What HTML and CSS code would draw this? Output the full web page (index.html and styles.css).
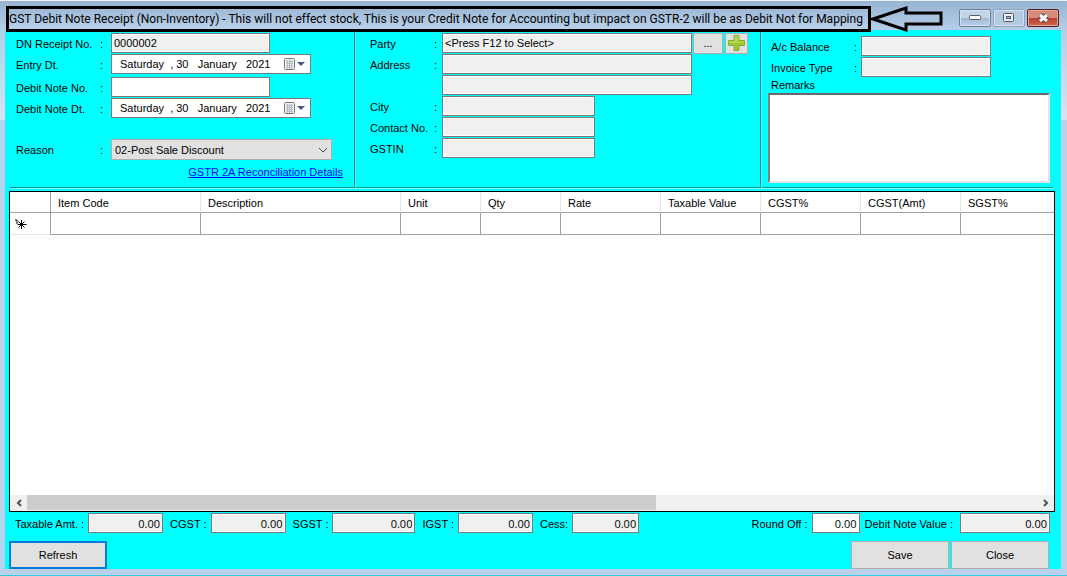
FILE: index.html
```html
<!DOCTYPE html>
<html lang="en">
<head>
    <meta charset="UTF-8">
    <title>GST Debit Note Receipt</title>
    <link rel="stylesheet" href="styles.css">
</head>

<body>
    <div class="window">
        <div class="titlebar">
            <h1>GST Debit Note Receipt (Non-Inventory) - This will not effect stock, This is your Credit Note for Accounting but impact on GSTR-2 will be as Debit Not for Mapping</h1>
            <svg class="arrow" width="72" height="26" viewBox="0 0 72 26">
                <path d="M2 13 L35 2 V7 H70 V18 H35 V24 Z" fill="none" stroke="#000" stroke-width="3"/>
            </svg>
            <div class="window-buttons">
                <button type="button" aria-label="Minimize">
                    <svg width="12" height="6" viewBox="0 0 12 6"><rect x="0.5" y="0.5" width="11" height="4" rx="1" fill="#fff" stroke="#555a66"/></svg>
                </button>
                <button type="button" class="maximize" aria-label="Maximize">
                    <svg width="12" height="10" viewBox="0 0 12 10"><rect x="0.5" y="0.5" width="10" height="8" rx="1" fill="#e8eff7" stroke="#555a66"/><rect x="3.5" y="3.5" width="4" height="2" fill="#a9c2dd" stroke="#555a66"/></svg>
                </button>
                <button type="button" class="close" aria-label="Close window">
                    <svg width="13" height="10" viewBox="0 0 13 10"><path d="M3 2 L10 8 M10 2 L3 8" stroke="#54414a" stroke-width="5"/><path d="M3 2 L10 8 M10 2 L3 8" stroke="#fff" stroke-width="3"/></svg>
                </button>
            </div>
        </div>

        <form class="content">
            <div class="panels">
                <div class="panel receipt">
                    <div class="row">
                        <label for="receipt-no">DN Receipt No.</label><span class="colon">:</span>
                        <input type="text" id="receipt-no" class="short" value="0000002" readonly>
                    </div>
                    <div class="row spaced">
                        <label for="entry-date">Entry Dt.</label><span class="colon">:</span>
                        <div class="date">
                            <input type="text" id="entry-date" value="Saturday  , 30   January   2021">
                            <button type="button" aria-label="Pick entry date">
                                <svg width="22" height="13" viewBox="0 0 22 13"><rect x="0.5" y="0.5" width="10" height="11" rx="1" fill="#f2f2f2" stroke="#777"/><path d="M2 3.5h7M2 5.5h7M2 7.5h7M2 9.5h7M3.5 2v9M5.500 2v9M7.500 2v9" stroke="#b5bcc5"/><path d="M13 4h8l-4 4z" fill="#44597c"/></svg>
                            </button>
                        </div>
                    </div>
                    <div class="row">
                        <label for="note-no">Debit Note No.</label><span class="colon">:</span>
                        <input type="text" id="note-no" class="short">
                    </div>
                    <div class="row">
                        <label for="note-date">Debit Note Dt.</label><span class="colon">:</span>
                        <div class="date">
                            <input type="text" id="note-date" value="Saturday  , 30   January   2021">
                            <button type="button" aria-label="Pick debit note date">
                                <svg width="22" height="13" viewBox="0 0 22 13"><rect x="0.5" y="0.5" width="10" height="11" rx="1" fill="#f2f2f2" stroke="#777"/><path d="M2 3.5h7M2 5.5h7M2 7.5h7M2 9.5h7M3.5 2v9M5.500 2v9M7.500 2v9" stroke="#b5bcc5"/><path d="M13 4h8l-4 4z" fill="#44597c"/></svg>
                            </button>
                        </div>
                    </div>
                    <div class="row reason">
                        <label for="reason">Reason</label><span class="colon">:</span>
                        <div class="dropdown">
                            <select id="reason">
                                <option>02-Post Sale Discount</option>
                            </select>
                            <svg width="10" height="6" viewBox="0 0 10 6"><path d="M1 1l4 4 4-4" fill="none" stroke="#444"/></svg>
                        </div>
                    </div>
                    <a href="#" class="link">GSTR 2A Reconciliation Details</a>
                </div>

                <div class="panel party">
                    <div class="row">
                        <label for="party">Party</label><span class="colon">:</span>
                        <input type="text" id="party" class="wide" value="&lt;Press F12 to Select&gt;" readonly>
                        <button type="button" class="browse">...</button>
                        <button type="button" class="add" aria-label="Add party">
                            <svg width="17" height="16" viewBox="0 0 17 16"><path d="M6 0.500h5v5h5.500v5H11v5H6v-5H0.500v-5H6z" fill="#9cc92f" stroke="#87a944"/><path d="M6.500 1h4v5.500H16V8H1V6h5.500z" fill="#b2d94a"/></svg>
                        </button>
                    </div>
                    <div class="row">
                        <label for="address">Address</label><span class="colon">:</span>
                        <input type="text" id="address" class="wide" readonly>
                    </div>
                    <div class="row">
                        <label></label><span class="colon"></span>
                        <input type="text" class="wide" aria-label="Address line 2" readonly>
                    </div>
                    <div class="row">
                        <label for="city">City</label><span class="colon">:</span>
                        <input type="text" id="city" class="medium" readonly>
                    </div>
                    <div class="row">
                        <label for="contact">Contact No.</label><span class="colon">:</span>
                        <input type="text" id="contact" class="medium" readonly>
                    </div>
                    <div class="row">
                        <label for="gstin">GSTIN</label><span class="colon">:</span>
                        <input type="text" id="gstin" class="medium" readonly>
                    </div>
                </div>

                <div class="panel account">
                    <div class="row">
                        <label for="balance">A/c Balance</label><span class="colon">:</span>
                        <input type="text" id="balance" readonly>
                    </div>
                    <div class="row">
                        <label for="invoice-type">Invoice Type</label><span class="colon">:</span>
                        <input type="text" id="invoice-type" readonly>
                    </div>
                    <label for="remarks" class="remarks-label">Remarks</label>
                    <textarea id="remarks"></textarea>
                </div>
            </div>

            <div class="items">
                <div class="table-wrap">
                    <table>
                        <colgroup>
                            <col class="col-mark">
                            <col class="col-code">
                            <col class="col-desc">
                            <col class="col-unit">
                            <col class="col-unit">
                            <col class="col-amount">
                            <col class="col-amount">
                            <col class="col-amount">
                            <col class="col-amount">
                            <col class="col-amount">
                        </colgroup>
                        <thead>
                            <tr>
                                <th></th>
                                <th>Item Code</th>
                                <th>Description</th>
                                <th>Unit</th>
                                <th>Qty</th>
                                <th>Rate</th>
                                <th>Taxable Value</th>
                                <th>CGST%</th>
                                <th>CGST(Amt)</th>
                                <th>SGST%</th>
                            </tr>
                        </thead>
                        <tbody>
                            <tr>
                                <td class="mark"><svg width="12" height="10" viewBox="0 0 12 10"><path d="M0 1h2v4M6.500 1v9M2.500 5.500h9M3.500 2.500l6 6M9.500 2.500l-6 6" fill="none" stroke="#000"/></svg></td>
                                <td></td>
                                <td></td>
                                <td></td>
                                <td></td>
                                <td></td>
                                <td></td>
                                <td></td>
                                <td></td>
                                <td></td>
                            </tr>
                        </tbody>
                    </table>
                </div>
                <div class="scrollbar">
                    <button type="button" aria-label="Scroll left"><svg width="6" height="8" viewBox="0 0 6 8"><path d="M5 1L2 4l3 3" fill="none" stroke="#505050" stroke-width="2"/></svg></button>
                    <div class="track"><div class="thumb"></div></div>
                    <button type="button" aria-label="Scroll right"><svg width="6" height="8" viewBox="0 0 6 8"><path d="M1 1l3 3-3 3" fill="none" stroke="#505050" stroke-width="2"/></svg></button>
                </div>
            </div>

            <div class="totals">
                <label for="taxable">Taxable Amt. :</label>
                <input type="text" id="taxable" value="0.00" readonly>
                <label for="cgst">CGST :</label>
                <input type="text" id="cgst" value="0.00" readonly>
                <label for="sgst">SGST :</label>
                <input type="text" id="sgst" value="0.00" readonly>
                <label for="igst">IGST :</label>
                <input type="text" id="igst" value="0.00" readonly>
                <label for="cess">Cess:</label>
                <input type="text" id="cess" value="0.00" readonly>
                <label for="round-off" class="push">Round Off :</label>
                <input type="text" id="round-off" value="0.00">
                <label for="note-value">Debit Note Value :</label>
                <input type="text" id="note-value" value="0.00" readonly>
            </div>

            <div class="actions">
                <button type="button" class="default">Refresh</button>
                <button type="button" class="push">Save</button>
                <button type="button">Close</button>
            </div>
        </form>
    </div>
</body>
</html>
```
FILE: styles.css
```css
* {
    box-sizing: border-box;
}
body {
    margin: 0;
    font-family: "Liberation Sans", Arial, sans-serif;
    font-size: 11px;
    color: #000;
}
input, button, select, textarea {
    font: inherit;
    color: inherit;
    border-radius: 0;
    margin: 0;
}
svg {
    display: block;
}

/* window frame */
.window {
    min-height: 100vh;
    display: flex;
    flex-direction: column;
    padding: 0 6px 6px 5px;
    border-top: 1px solid #eef3f8;
    border-bottom: 1px solid #35cbe0;
    background: linear-gradient(#97b4d2 0, #b6cee8 30px, #d7e4f2 119px, #b9d1ea 119px);
}
.titlebar {
    display: flex;
    height: 29px;
    padding: 5px 2px 0 1px;
}
.titlebar h1 {
    position: relative;
    height: 26px;
    width: 865px;
    margin: 0;
    border: 3px solid #000;
    font-family: Roboto, "Segoe UI", sans-serif;
    font-size: 12px;
    font-weight: normal;
    line-height: 20px;
    white-space: nowrap;
    background: linear-gradient(#9fb9d6, #b9d1ea);
}
.arrow {
    position: relative;
    flex: none;
}
.window-buttons {
    display: flex;
    gap: 2px;
    margin-left: auto;
    padding-top: 3px;
}
.window-buttons button {
    display: flex;
    align-items: center;
    justify-content: center;
    width: 32px;
    height: 18px;
    padding: 0;
    border: 1px solid #6d7f98;
    border-radius: 2px;
    box-shadow: inset 0 0 0 1px #d5e2f0;
    background: linear-gradient(#c3d5e8 50%, #a0b9d3 50%, #b9d0e8);
}
.window-buttons .maximize {
    border-color: #8ea3bf;
    background: #b3cae3;
}
.window-buttons .close {
    border-color: #56222a;
    box-shadow: inset 0 0 0 1px #e2a79b;
    background: linear-gradient(#d88b7c 50%, #b93c2c 50%, #cc6a4c);
}

.content {
    flex: 1;
    display: flex;
    flex-direction: column;
    background: #00ffff;
}

/* header fields */
.panels {
    display: grid;
    grid-template-columns: 346px 406px 1fr;
    height: 159px;
    margin: 0 8px 0 5px;
}
.panel {
    padding-top: 3px;
    border-right: 1px solid #7fdfdf;
    border-bottom: 1px solid #7fffff;
    box-shadow: inset -1px -1px 0 #009a9a;
}
.row {
    display: flex;
    align-items: center;
    height: 20px;
    margin-bottom: 1px;
}
.row.spaced {
    margin-bottom: 3px;
}
.row label {
    flex: 1;
    padding-top: 2px;
}
.colon {
    width: 11px;
    padding-top: 2px;
}
.row input, .totals input {
    height: 20px;
    padding: 0 2px;
    border: 1px solid #7a7a7a;
    background: #fff;
    outline: none;
}
.row input:read-only, .totals input:read-only {
    background: #f0f0f0;
    box-shadow: inset 0 0 0 1px #fff;
}

.receipt {
    padding-left: 6px;
}
.receipt .row label {
    flex: none;
    width: 84px;
}
.short {
    width: 159px;
}
.date {
    display: flex;
    align-items: center;
    width: 200px;
    height: 20px;
    border: 1px solid #7a7a7a;
    background: #fff;
}
.row .date input {
    flex: 1;
    min-width: 0;
    height: 18px;
    padding: 0 0 0 8px;
    border: none;
    white-space: pre;
}
.date button {
    padding: 0 4px 0 0;
    border: none;
    background: none;
}
.reason {
    margin-top: 21px;
}
.dropdown {
    position: relative;
    width: 221px;
}
.dropdown select {
    display: block;
    width: 100%;
    height: 21px;
    padding: 1px 3px 0;
    border: 1px solid #adadad;
    background: #e1e1e1;
    appearance: none;
}
.dropdown svg {
    position: absolute;
    right: 4px;
    top: 8px;
    pointer-events: none;
}
.link {
    display: block;
    margin: 7px 12px 0 0;
    text-align: right;
    color: #0000ff;
}

.party {
    padding-left: 14px;
}
.party .row label, .account .row label {
    flex: none;
}
.party .row label {
    width: 64px;
}
.party .colon {
    width: 8px;
}
.wide {
    width: 250px;
}
.medium {
    width: 153px;
}
.browse, .add {
    display: flex;
    align-items: center;
    justify-content: center;
    height: 21px;
    padding: 0;
    border: 1px solid #adadad;
    background: #e1e1e1;
}
.browse {
    width: 30px;
    margin: 0 2px 0 1px;
}
.add {
    width: 23px;
}

.account {
    padding: 6px 3px 0 6px;
    border-right: none;
    box-shadow: inset 0 -1px 0 #009a9a;
}
.account .row label {
    width: 86px;
    padding-left: 3px;
}
.account .colon {
    width: 7px;
}
.account .row input {
    width: 130px;
}
.remarks-label {
    display: block;
    height: 15px;
    padding-left: 3px;
    line-height: 15px;
}
.account textarea {
    display: block;
    width: 100%;
    height: 90px;
    border: 2px solid #e3e3e3;
    border-top-color: #696969;
    border-left-color: #808080;
    background: #fff;
    resize: none;
    outline: none;
}

/* item grid */
.items {
    flex: 1;
    display: flex;
    flex-direction: column;
    margin: 2px 6px 0 4px;
    border: 1px solid #000;
    background: #fff;
}
.table-wrap {
    flex: 1;
    width: 100%;
    overflow: hidden;
    contain: inline-size;
}
table {
    width: 1050px;
    table-layout: fixed;
    border-collapse: separate;
    border-spacing: 0;
}
.col-mark {
    width: 41px;
}
.col-code {
    width: 150px;
}
.col-desc {
    width: 200px;
}
.col-unit {
    width: 80px;
}
.col-amount {
    width: 100px;
}
th, td {
    height: 22px;
    padding: 0 7px;
    border-right: 1px solid #a0a0a0;
    border-bottom: 1px solid #a0a0a0;
    text-align: left;
}
th {
    height: 21px;
    padding-top: 2px;
    border-right-color: #e5e5e5;
    font-weight: normal;
}
th:first-child {
    border-right-color: #a0a0a0;
}
td.mark {
    padding-left: 5px;
    border-bottom-color: #e5e5e5;
}
.scrollbar {
    display: flex;
    height: 16px;
    background: #f0f0f0;
}
.scrollbar button {
    display: flex;
    align-items: center;
    justify-content: center;
    width: 17px;
    padding: 0;
    border: none;
    background: none;
}
.track {
    flex: 1;
}
.thumb {
    width: 62.3%;
    height: 15px;
    background: #cdcdcd;
}

/* totals and buttons */
.totals {
    display: flex;
    align-items: center;
    height: 20px;
    margin: 1px 11px 0 10px;
}
.totals label {
    padding: 2px 4px 0 0;
    white-space: nowrap;
}
.totals input {
    width: 75px;
    margin-right: 7px;
    font-family: "Open Sans", "Segoe UI", sans-serif;
    text-align: right;
}
.totals #sgst {
    width: 83px;
}
.totals #cess {
    width: 67px;
}
.totals #round-off {
    width: 48px;
    margin-right: 5px;
}
.totals #round-off + label {
    padding-right: 7px;
}
.totals #note-value {
    width: 90px;
    margin-right: 0;
}
.totals .push, .actions .push {
    margin-left: auto;
}
.actions {
    display: flex;
    gap: 2px;
    margin: 8px 12px 0 4px;
}
.actions button {
    width: 98px;
    height: 28px;
    padding: 0;
    border: 1px solid #adadad;
    background: #e1e1e1;
}
.actions .default {
    border: 2px solid #0078d7;
}
```
